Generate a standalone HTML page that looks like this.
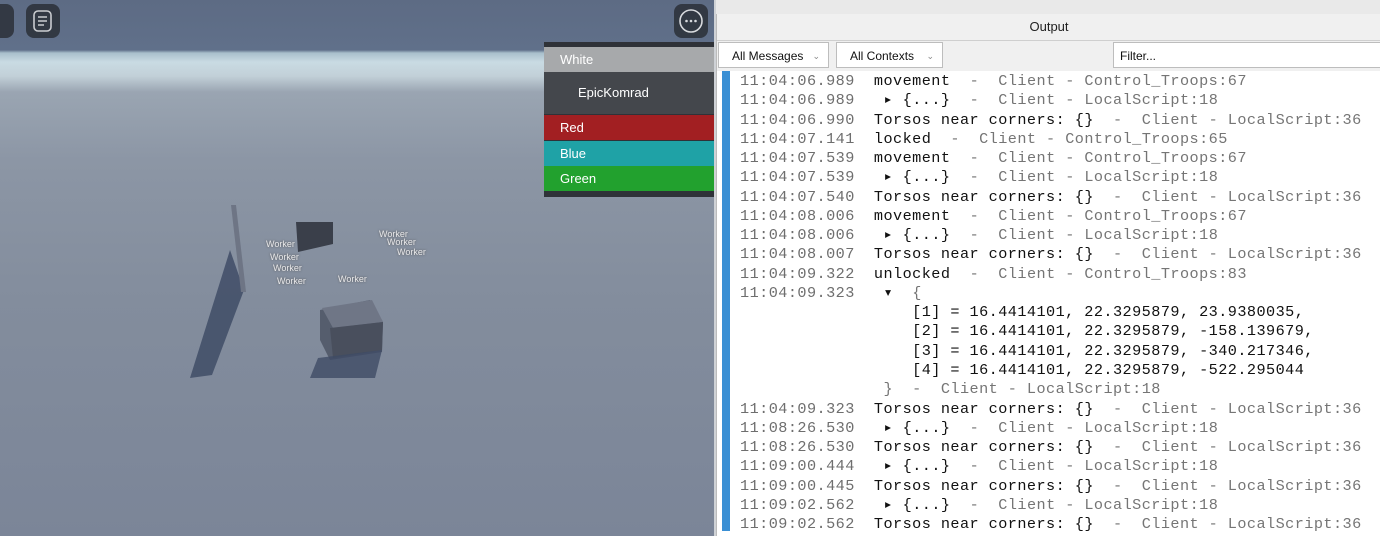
<!DOCTYPE html>
<html><head><style>
body{margin:0;width:1380px;height:536px;overflow:hidden;position:relative;font-family:"Liberation Sans",sans-serif;background:#e9e9e9}
#game{position:absolute;left:0;top:0;width:714px;height:536px;overflow:hidden;
background:linear-gradient(#5d6b84 0,#60708a 50px,#a9c0cc 53px,#c9dbe3 62px,#c2d0d8 76px,#9aa5b2 92px,#8c96a5 160px,#838d9d 300px,#7b8598 536px)}
.btn{position:absolute;top:4px;width:34px;height:34px;border-radius:8px;background:#2b3038;opacity:.85}
#panel{position:absolute;left:716px;top:14px;width:664px;height:522px;background:#f0f0f0;border-left:1px solid #bbb}
#title{height:26px;line-height:26px;text-align:center;font-size:13px;color:#222;border-bottom:1px solid #cfcfcf}
.dd{position:absolute;top:28px;height:26px;border:1px solid #bdbdbd;background:#fff;font-size:12px;line-height:26px;padding-left:13px;box-sizing:border-box;color:#111}
.dd span{position:absolute;right:8px;color:#888;font-size:9px}
#log{position:absolute;left:0;top:57px;right:0;bottom:0;background:#fff}
#bar{position:absolute;left:5px;top:0;width:8px;height:460px;background:#3a8fd4}
#lines{position:absolute;left:23px;top:1px;font-family:"Liberation Mono","DejaVu Sans Mono",monospace;font-size:15.2px;line-height:19.27px;white-space:pre;color:#111;letter-spacing:0.45px}
.t{color:#6e6e6e}.g{color:#757575}
.row{position:absolute;left:544px;width:170px;height:25px;color:#fff;font-size:13px;line-height:25px;padding-left:16px;box-sizing:border-box}
.lab{position:absolute;color:#e8e8ea;font-size:9px;text-shadow:0 0 2px #555}
</style></head><body>
<div id="game">
 <div class="btn" style="left:-20px"></div>
 <div class="btn" style="left:26px"><svg width="34" height="34"><rect x="8" y="7" width="17" height="20" rx="4" fill="none" stroke="#ddd" stroke-width="1.6"/><path d="M12 13h9M12 17h9M12 21h6" stroke="#ddd" stroke-width="1.4"/></svg></div>
 <div class="btn" style="left:674px"><svg width="34" height="34"><circle cx="17" cy="17" r="11" fill="none" stroke="#eee" stroke-width="1.6"/><circle cx="12.5" cy="17" r="1.3" fill="#eee"/><circle cx="17" cy="17" r="1.3" fill="#eee"/><circle cx="21.5" cy="17" r="1.3" fill="#eee"/></svg></div>
 <div style="position:absolute;left:544px;top:42px;width:170px;height:155px;background:#2f3238"></div>
 <div class="row" style="top:47px;background:#a7a9ab">White</div>
 <div class="row" style="top:72px;height:42px;line-height:42px;background:#44474c;padding-left:34px">EpicKomrad</div>
 <div class="row" style="top:115px;background:#a21f22">Red</div>
 <div class="row" style="top:141px;background:#1fa2a6">Blue</div>
 <div class="row" style="top:166px;background:#22a12e">Green</div>
 <svg style="position:absolute;left:0;top:0" width="714" height="536">
  <polygon points="230,250 244,290 212,375 190,378" fill="#3f4c66" opacity=".85"/>
  <polygon points="231,205 236,205 246,292 241,292" fill="#6e7585"/>
  <polygon points="296,222 333,222 333,244 298,252" fill="#3a3f4a"/>
  <polygon points="320,310 370,300 383,322 382,352 330,360 320,340" fill="#555d6d"/>
  <polygon points="322,308 372,300 383,322 333,328" fill="#6f7686"/>
  <polygon points="330,328 383,322 382,350 333,358" fill="#494f5d"/>
  <polygon points="318,358 382,350 375,378 310,378" fill="#3e4b65" opacity=".8"/>
 </svg>
 <div class="lab" style="left:266px;top:239px">Worker</div><div class="lab" style="left:270px;top:252px">Worker</div>
 <div class="lab" style="left:273px;top:263px">Worker</div><div class="lab" style="left:277px;top:276px">Worker</div>
 <div class="lab" style="left:338px;top:274px">Worker</div><div class="lab" style="left:379px;top:229px">Worker</div>
 <div class="lab" style="left:387px;top:237px">Worker</div><div class="lab" style="left:397px;top:247px">Worker</div>
</div>
<div style="position:absolute;left:714px;top:0;width:2px;height:536px;background:#cfd2d6"></div>
<div id="panel">
 <div id="title">Output</div>
 <div class="dd" style="left:1px;width:111px">All Messages<span>&#8964;</span></div>
 <div class="dd" style="left:119px;width:107px">All Contexts<span>&#8964;</span></div>
 <div class="dd" style="left:396px;width:268px;padding-left:6px">Filter...</div>
 <div id="log"><div id="bar"></div>
<div id="lines"><span class="t">11:04:06.989</span>  movement  <span class="g">-  Client - Control_Troops:67</span>
<span class="t">11:04:06.989</span>   ▸ {...}  <span class="g">-  Client - LocalScript:18</span>
<span class="t">11:04:06.990</span>  Torsos near corners: {}  <span class="g">-  Client - LocalScript:36</span>
<span class="t">11:04:07.141</span>  locked  <span class="g">-  Client - Control_Troops:65</span>
<span class="t">11:04:07.539</span>  movement  <span class="g">-  Client - Control_Troops:67</span>
<span class="t">11:04:07.539</span>   ▸ {...}  <span class="g">-  Client - LocalScript:18</span>
<span class="t">11:04:07.540</span>  Torsos near corners: {}  <span class="g">-  Client - LocalScript:36</span>
<span class="t">11:04:08.006</span>  movement  <span class="g">-  Client - Control_Troops:67</span>
<span class="t">11:04:08.006</span>   ▸ {...}  <span class="g">-  Client - LocalScript:18</span>
<span class="t">11:04:08.007</span>  Torsos near corners: {}  <span class="g">-  Client - LocalScript:36</span>
<span class="t">11:04:09.322</span>  unlocked  <span class="g">-  Client - Control_Troops:83</span>
<span class="t">11:04:09.323</span>   ▾  <span class="g">{</span>
                  [1] = 16.4414101, 22.3295879, 23.9380035,
                  [2] = 16.4414101, 22.3295879, -158.139679,
                  [3] = 16.4414101, 22.3295879, -340.217346,
                  [4] = 16.4414101, 22.3295879, -522.295044
               <span class="g">}  -  Client - LocalScript:18</span>
<span class="t">11:04:09.323</span>  Torsos near corners: {}  <span class="g">-  Client - LocalScript:36</span>
<span class="t">11:08:26.530</span>   ▸ {...}  <span class="g">-  Client - LocalScript:18</span>
<span class="t">11:08:26.530</span>  Torsos near corners: {}  <span class="g">-  Client - LocalScript:36</span>
<span class="t">11:09:00.444</span>   ▸ {...}  <span class="g">-  Client - LocalScript:18</span>
<span class="t">11:09:00.445</span>  Torsos near corners: {}  <span class="g">-  Client - LocalScript:36</span>
<span class="t">11:09:02.562</span>   ▸ {...}  <span class="g">-  Client - LocalScript:18</span>
<span class="t">11:09:02.562</span>  Torsos near corners: {}  <span class="g">-  Client - LocalScript:36</span></div>
 </div>
</div>
</body></html>
